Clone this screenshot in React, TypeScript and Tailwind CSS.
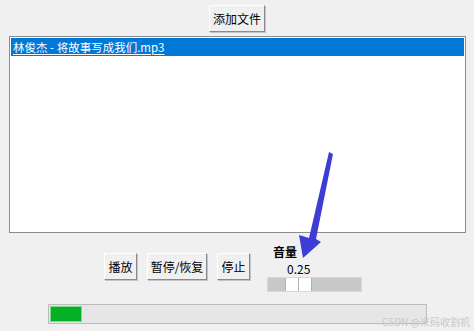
import React from "react"

const font = { fontFamily: '"Noto Sans CJK SC", "Liberation Sans", sans-serif' }

function WinButton({ label, className = "" }: { label: string; className?: string }) {
  return (
    <button
      className={`flex items-center justify-center h-[27px] bg-[#f0f0f0] text-[12px] text-black border border-t-white border-l-white border-r-[#8a8a8a] border-b-[#8a8a8a] shadow-[1px_1px_0_#c4c4c4] ${className}`}
    >
      {label}
    </button>
  )
}

export default function App() {
  return (
    <div className="relative w-[474px] h-[331px] bg-[#f0f0f0] overflow-hidden" style={font}>
      <div className="flex justify-center pt-[5px]">
        <WinButton label="添加文件" className="w-[56px]" />
      </div>

      <div className="ml-[9px] mt-[4px] w-[457px] h-[197px] bg-white border border-[#8c8c8c] pt-[1px] px-[1px]">
        <div className="h-[18px] bg-[#0078d7] text-white text-[11.5px] leading-[18px] pl-[2px] underline underline-offset-2">
          林俊杰 - 将故事写成我们.mp3
        </div>
      </div>

      <div className="flex items-start ml-[104px]">
        <div className="flex gap-[10px] mt-[20px]">
          <WinButton label="播放" className="w-[33px]" />
          <WinButton label="暂停/恢复" className="w-[60px]" />
          <WinButton label="停止" className="w-[33px]" />
        </div>
        <div className="ml-[17px] mt-[12px] w-[95px] flex flex-col">
          <span className="ml-[6px] text-[12px] leading-[13px] font-semibold text-black">音量</span>
          <span className="ml-[20px] mt-[4px] text-[12px] leading-[13px] text-black">0.25</span>
          <div className="mt-[2px] flex h-[15px] bg-[#c8c8c8] border border-[#d8d8d8]">
            <div className="ml-[17px] flex">
              <div className="w-[14px] h-full bg-white border-x border-[#b0b0b0]" />
              <div className="w-[13px] h-full bg-white border-r border-[#b0b0b0]" />
            </div>
          </div>
        </div>
      </div>

      <div className="ml-[48px] mt-[12px] w-[379px] h-[20px] bg-[#e6e6e6] border border-[#bcbcbc] p-[1px]">
        <div className="w-[32px] h-full bg-[#06b025] border border-[#7fd98f]" />
      </div>

      <span className="absolute right-[4px] bottom-[2px] text-[10px] text-[#c8c8c8]">CSDN @米码收割机</span>

      <svg className="absolute left-0 top-0" width="474" height="331" viewBox="0 0 474 331">
        <polygon
          points="329,152 333,154 316,239 321,242 303,258 299,235 309,238"
          fill="#3d3dd6"
        />
      </svg>
    </div>
  )
}
